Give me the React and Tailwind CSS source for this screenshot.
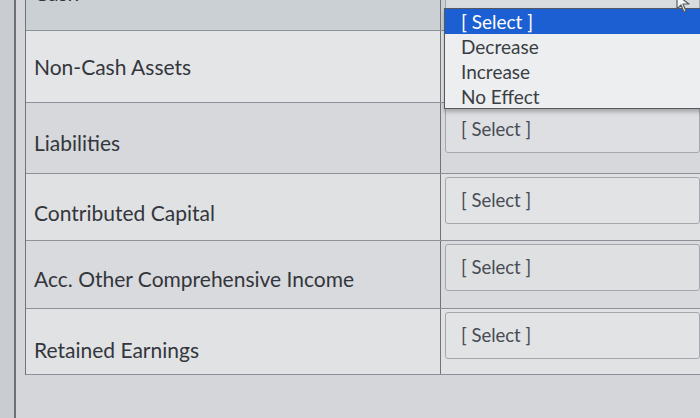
import React from "react";

const rows = [
  { label: "Cash", h: "h-[71px]", bg: "bg-[#cbd0d5]", pt: "pt-[20px]" },
  { label: "Non-Cash Assets", h: "h-[72px]", bg: "bg-[#e3e5e7]", pt: "pt-[23px]" },
  { label: "Liabilities", h: "h-[71px]", bg: "bg-[#d6d8db]", pt: "pt-[27px]" },
  { label: "Contributed Capital", h: "h-[67px]", bg: "bg-[#dfe1e3]", pt: "pt-[26px]" },
  { label: "Acc. Other Comprehensive Income", h: "h-[68px]", bg: "bg-[#d8dadd]", pt: "pt-[25px]" },
  { label: "Retained Earnings", h: "h-[66px]", bg: "bg-[#e0e2e4]", pt: "pt-[28px]" },
];

function Row({ r, first }) {
  return (
    <div className={`grid grid-cols-[415px_1fr] ${r.h} ${r.bg} border-b border-[#8d9197] ${first ? "-mt-[40px]" : ""}`}>
      <div className={`border-r border-[#6f737a] pl-[8px] ${r.pt} text-[21px] leading-[25px] text-[#33363c]`}>
        {r.label}
      </div>
      <div className="pl-[4px] pt-[3px]">
        <div className="h-[47px] border border-[#a4a8ae] rounded-[3px] bg-[#e2e4e6]/60 pl-[15px] pt-[10px] text-[18.5px] leading-[24px] text-[#474b53]">
          {first ? "" : "[ Select ]"}
        </div>
      </div>
    </div>
  );
}

export default function App() {
  return (
    <div className="relative w-[700px] h-[418px] overflow-hidden bg-[#d4d6d9] flex font-['Lato','Noto_Sans',sans-serif]">
      <div className="w-[16px] shrink-0 bg-[#c9ccd0] border-r-2 border-[#6e7278]"></div>
      <div className="flex-1 pl-[9px]">
        <div className="border-l border-[#6f737a]">
          {rows.map((r, i) => (
            <Row key={r.label} r={r} first={i === 0} />
          ))}
        </div>
      </div>

      <div className="absolute left-[444px] top-[8px] w-[270px] h-[101px] bg-[#eceeef] border border-[#55595f] shadow-[0_3px_4px_rgba(0,0,0,0.25)] text-[19px] leading-[25px] text-[#3a3e44]">
        <div className="h-[25px] bg-[#1c5fd2] text-white pl-[16px]">[ Select ]</div>
        <div className="pl-[16px]">Decrease</div>
        <div className="pl-[16px]">Increase</div>
        <div className="pl-[16px]">No Effect</div>
      </div>

      <svg className="absolute left-[675px] top-[-6px]" width="18" height="20" viewBox="0 0 18 20">
        <path d="M2 1 L2 15 L6 11 L9 18 L11 17 L8 10 L14 10 Z" fill="#f4f5f6" stroke="#555a60" strokeWidth="1.2" strokeLinejoin="round" />
      </svg>
    </div>
  );
}
